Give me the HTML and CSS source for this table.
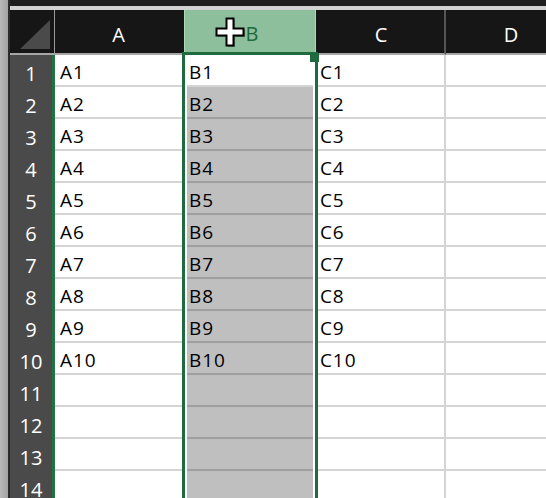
FILE: index.html
```html
<!DOCTYPE html>
<html>
<head>
<meta charset="utf-8">
<link rel="stylesheet" href="styles.css">
</head>
<body>
<div class="app">
  <div class="edge"></div>
  <div class="sheet">
    <div class="topbar"></div>
    <div class="grid">
      <div class="hc corner"><span class="tri"></span></div>
      <div class="hc ca">A</div>
      <div class="hc cb"><div class="cb-in">B</div></div>
      <div class="hc cc">C</div>
      <div class="hc cd">D</div>

      <div class="rh">1</div><div class="c a">A1</div><div class="c b"><div class="in first">B1</div></div><div class="c cc2">C1</div><div class="c d"></div>
      <div class="rh">2</div><div class="c a">A2</div><div class="c b"><div class="in">B2</div></div><div class="c cc2">C2</div><div class="c d"></div>
      <div class="rh">3</div><div class="c a">A3</div><div class="c b"><div class="in">B3</div></div><div class="c cc2">C3</div><div class="c d"></div>
      <div class="rh">4</div><div class="c a">A4</div><div class="c b"><div class="in">B4</div></div><div class="c cc2">C4</div><div class="c d"></div>
      <div class="rh">5</div><div class="c a">A5</div><div class="c b"><div class="in">B5</div></div><div class="c cc2">C5</div><div class="c d"></div>
      <div class="rh">6</div><div class="c a">A6</div><div class="c b"><div class="in">B6</div></div><div class="c cc2">C6</div><div class="c d"></div>
      <div class="rh">7</div><div class="c a">A7</div><div class="c b"><div class="in">B7</div></div><div class="c cc2">C7</div><div class="c d"></div>
      <div class="rh">8</div><div class="c a">A8</div><div class="c b"><div class="in">B8</div></div><div class="c cc2">C8</div><div class="c d"></div>
      <div class="rh">9</div><div class="c a">A9</div><div class="c b"><div class="in">B9</div></div><div class="c cc2">C9</div><div class="c d"></div>
      <div class="rh">10</div><div class="c a">A10</div><div class="c b"><div class="in">B10</div></div><div class="c cc2">C10</div><div class="c d"></div>
      <div class="rh">11</div><div class="c a"></div><div class="c b"><div class="in"></div></div><div class="c cc2"></div><div class="c d"></div>
      <div class="rh">12</div><div class="c a"></div><div class="c b"><div class="in"></div></div><div class="c cc2"></div><div class="c d"></div>
      <div class="rh">13</div><div class="c a"></div><div class="c b"><div class="in"></div></div><div class="c cc2"></div><div class="c d"></div>
      <div class="rh">14</div><div class="c a"></div><div class="c b"><div class="in"></div></div><div class="c cc2"></div><div class="c d"></div>
    </div>
  </div>
  <div class="handle"></div>
  <svg class="cursor" width="34" height="34" viewBox="0 0 34 34">
    <path d="M13.5 3.5h7v10h10v7h-10v10h-7v-10h-10v-7h10z" fill="rgba(0,0,0,0.35)" transform="translate(1.5 1.5)"/>
    <path d="M13.5 3.5h7v10h10v7h-10v10h-7v-10h-10v-7h10z" fill="#fff" stroke="#000" stroke-width="2" stroke-linejoin="miter"/>
  </svg>
</div>
</body>
</html>
```
FILE: styles.css
```css
* { box-sizing: border-box; }
html, body { margin: 0; padding: 0; }
body {
  width: 546px;
  height: 498px;
  overflow: hidden;
  background: #fff;
  font-family: "Open Sans", "Liberation Sans", sans-serif;
}
.app {
  position: relative;
  display: flex;
  width: 546px;
  height: 498px;
  overflow: hidden;
}
.edge {
  flex: 0 0 10px;
  background: linear-gradient(to right, #b9b9b9, #a2a2a2);
  border-right: 2px solid #2c2c2c;
}
.sheet {
  flex: 1 1 auto;
  min-width: 0;
  overflow: hidden;
}
.topbar {
  height: 10px;
  background: #1e1e1e;
  border-bottom: 4px solid #d2d2d2;
}
.grid {
  display: grid;
  grid-template-columns: 45px 127px 136px 128px 130px;
  grid-template-rows: 45px repeat(14, 32px);
  width: 566px;
}
.hc {
  background: #161616;
  border-bottom: 2px solid #a6a6a6;
  color: #fff;
  font-size: 20px;
  font-weight: 500;
  display: flex;
  align-items: center;
  justify-content: center;
  padding-top: 5px;
}
.corner {
  position: relative;
  border-right: 1px solid #9a9a9a;
}
.tri {
  position: absolute;
  left: 10px;
  top: 10px;
  width: 30px;
  height: 29px;
  background: #4a4a4a;
  clip-path: polygon(0 100%, 100% 0, 100% 100%);
}
.cb {
  border-bottom: 3px solid #1f6b3f;
  padding: 0 2px 0 2px;
  align-items: stretch;
}
.cb-in {
  flex: 1;
  background: #8dbf9d;
  box-shadow: inset 1px 0 0 #a9dbb4, inset -1px 0 0 #a9dbb4;
  color: #1f6b3f;
  display: flex;
  align-items: center;
  justify-content: center;
  padding-top: 5px;
  padding-left: 4px;
}
.cc { border-right: 2px solid #555; }
.rh {
  background: #4a4a4a;
  border-right: 3px solid #217346;
  color: #fff;
  font-size: 20px;
  font-weight: 500;
  display: flex;
  align-items: center;
  justify-content: center;
  padding-top: 4px;
}
.c {
  font-size: 19px;
  letter-spacing: 0.9px;
  color: #000;
  border-bottom: 2px solid #d4d4d4;
  display: flex;
  align-items: center;
  padding-top: 3px;
  white-space: nowrap;
}
.a { padding-left: 5px; }
.cc2 { padding-left: 2px; border-right: 2px solid #d4d4d4; }
.b {
  border-bottom: 0;
  border-left: 3px solid #1f6b3f;
  border-right: 3px solid #1f6b3f;
  padding: 0 2px;
  background: #fff;
  align-items: stretch;
}
.b .in {
  flex: 1;
  background: #bfbfbf;
  border-bottom: 2px solid #9f9f9f;
  padding-left: 2px;
  padding-top: 3px;
  display: flex;
  align-items: center;
}
.b .in.first {
  background: #fff;
  border-bottom-color: #d4d4d4;
}
.handle {
  position: absolute;
  left: 310px;
  top: 53px;
  width: 9px;
  height: 9px;
  background: #1f6b3f;
}
.cursor {
  position: absolute;
  left: 213px;
  top: 15px;
}
```
